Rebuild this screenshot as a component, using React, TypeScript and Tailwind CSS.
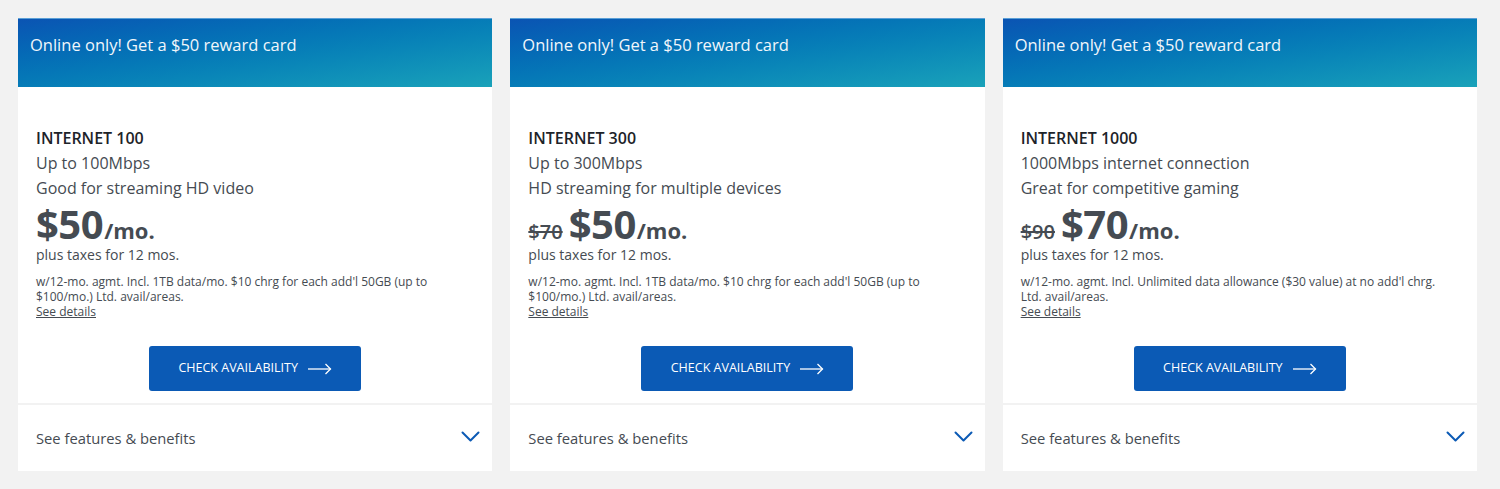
type Plan = {
  name: string
  speed: string
  blurb: string
  oldPrice?: string
  price: string
  fine: string
}

const plans: Plan[] = [
  {
    name: 'INTERNET 100',
    speed: 'Up to 100Mbps',
    blurb: 'Good for streaming HD video',
    price: '$50',
    fine: "w/12-mo. agmt. Incl. 1TB data/mo. $10 chrg for each add'l 50GB (up to $100/mo.) Ltd. avail/areas.",
  },
  {
    name: 'INTERNET 300',
    speed: 'Up to 300Mbps',
    blurb: 'HD streaming for multiple devices',
    oldPrice: '$70',
    price: '$50',
    fine: "w/12-mo. agmt. Incl. 1TB data/mo. $10 chrg for each add'l 50GB (up to $100/mo.) Ltd. avail/areas.",
  },
  {
    name: 'INTERNET 1000',
    speed: '1000Mbps internet connection',
    blurb: 'Great for competitive gaming',
    oldPrice: '$90',
    price: '$70',
    fine: "w/12-mo. agmt. Incl. Unlimited data allowance ($30 value) at no add'l chrg. Ltd. avail/areas.",
  },
]

function ArrowRight() {
  return (
    <svg width="24" height="12" viewBox="0 0 24 12" fill="none" stroke="currentColor" strokeWidth="1.3">
      <path d="M0 6h22.5" />
      <path d="M17.5 1l5 5-5 5" />
    </svg>
  )
}

function Chevron() {
  return (
    <svg width="19" height="11" viewBox="0 0 19 11" fill="none" stroke="currentColor" strokeWidth="2" strokeLinecap="round" strokeLinejoin="round">
      <path d="M1.5 1.5l8 8 8-8" />
    </svg>
  )
}

function PlanCard({ plan }: { plan: Plan }) {
  return (
    <div className="bg-white flex flex-col">
      {/* Promo banner */}
      <div className="h-[69px] px-3 pt-[14px] bg-linear-to-br from-[#0b54b3] to-[#1aa2b9] border-t border-[#5a9fd6] text-[#f1f6fb] text-[16.5px] leading-[24px]">
        Online only! Get a $50 reward card
      </div>

      {/* Plan details */}
      <div className="px-[18px] pt-[39px] text-[#454b52]">
        <h3 className="text-[16px] leading-[25px] font-semibold text-[#1d2329]">{plan.name}</h3>
        <p className="text-[16px] leading-[25px]">{plan.speed}</p>
        <p className="text-[16px] leading-[25px]">{plan.blurb}</p>

        <div className="flex items-baseline h-[45px] leading-[45px]">
          {plan.oldPrice && (
            <span className="text-[20px] font-semibold line-through mr-[6px]">{plan.oldPrice}</span>
          )}
          <span className="text-[40px] font-bold tracking-[-0.5px]">{plan.price}</span>
          <span className="text-[22px] font-bold ml-[1px]">/mo.</span>
        </div>
        <p className="text-[14px] leading-[18px]">plus taxes for 12 mos.</p>

        <p className="text-[12px] leading-[15px] mt-[10px] pr-4">{plan.fine}</p>
        <a href="#" className="block w-fit text-[12px] leading-[15px] underline">See details</a>

        <div className="flex justify-center mt-[27px] mb-[12px]">
          <button className="w-[212px] h-[45px] rounded-[3px] bg-[#0b5ab5] text-white flex items-center justify-center gap-[10px] text-[12.5px] font-medium">
            <span>CHECK AVAILABILITY</span>
            <ArrowRight />
          </button>
        </div>
      </div>

      {/* Features toggle */}
      <div className="border-t-2 border-[#f2f2f2] h-[68px] pl-[18px] pr-[12px] flex items-center justify-between">
        <span className="text-[14.75px] text-[#454b52]">See features &amp; benefits</span>
        <span className="text-[#0b5ab5] -mt-[3px]">
          <Chevron />
        </span>
      </div>
    </div>
  )
}

export default function App() {
  return (
    <div className="min-h-screen bg-[#f2f2f2] pt-[18px] pl-[18px] pr-[23px]" style={{ fontFamily: '"Open Sans", "Noto Sans", sans-serif' }}>
      <div className="grid grid-cols-3 gap-[18px]">
        {plans.map((plan) => (
          <PlanCard key={plan.name} plan={plan} />
        ))}
      </div>
    </div>
  )
}
